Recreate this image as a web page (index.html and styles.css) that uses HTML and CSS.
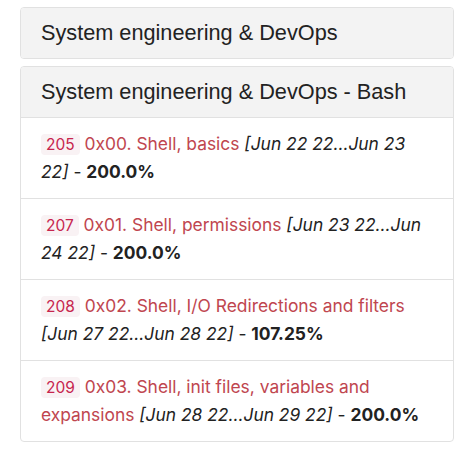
FILE: index.html
```html
<!DOCTYPE html>
<html>
<head>
<meta charset="utf-8">
<link rel="stylesheet" href="styles.css">
</head>
<body>
<div class="page">
  <div class="card">
    <div class="card-header">System engineering &amp; DevOps</div>
  </div>
  <div class="card">
    <div class="card-header">System engineering &amp; DevOps - Bash</div>
    <ul class="list">
      <li class="item"><code class="badge">205</code> <a class="link" href="#">0x00. Shell, basics</a> <em class="date">[Jun 22 22...Jun 23 22]</em> - <strong>200.0%</strong></li>
      <li class="item"><code class="badge">207</code> <a class="link" href="#">0x01. Shell, permissions</a> <em class="date">[Jun 23 22...Jun 24 22]</em> - <strong>200.0%</strong></li>
      <li class="item"><code class="badge">208</code> <a class="link" href="#">0x02. Shell, I/O Redirections and filters</a> <em class="date">[Jun 27 22...Jun 28 22]</em> - <strong>107.25%</strong></li>
      <li class="item"><code class="badge">209</code> <a class="link" href="#">0x03. Shell, init files, variables and expansions</a> <em class="date">[Jun 28 22...Jun 29 22]</em> - <strong>200.0%</strong></li>
    </ul>
  </div>
</div>
</body>
</html>
```
FILE: styles.css
```css
html, body {
  margin: 0;
  padding: 0;
  background: #ffffff;
}
.page {
  padding: 7px 20px 0 20px;
  display: flex;
  flex-direction: column;
  gap: 7px;
}
.card {
  border: 1px solid #e1e1e1;
  border-radius: 4px;
  overflow: hidden;
  background: #fff;
}
.card-header {
  background: #f3f3f3;
  padding: 11px 20px;
  line-height: 28px;
  font-family: "Liberation Sans", Arial, sans-serif;
  font-size: 21.7px;
  color: #222;
}
.card .card-header + .list {
  border-top: 1px solid #e1e1e1;
}
.list {
  list-style: none;
  margin: 0;
  padding: 0;
}
.item {
  padding: 12px 20px;
  line-height: 28px;
  font-family: Inter, "Noto Sans", sans-serif;
  font-size: 17.4px;
  color: #222;
  border-top: 1px solid #e1e1e1;
}
.item:first-child {
  border-top: none;
}
.badge {
  display: inline-block;
  font-family: Inter, "Noto Sans", sans-serif;
  font-size: 15.5px;
  line-height: 21px;
  color: #c7254e;
  background: #f9f2f4;
  padding: 0 5px;
  border-radius: 4px;
}
.link {
  color: #c0464f;
  text-decoration: none;
}
.date {
  font-style: italic;
  color: #222;
}
strong {
  font-weight: 700;
  color: #222;
}
```
